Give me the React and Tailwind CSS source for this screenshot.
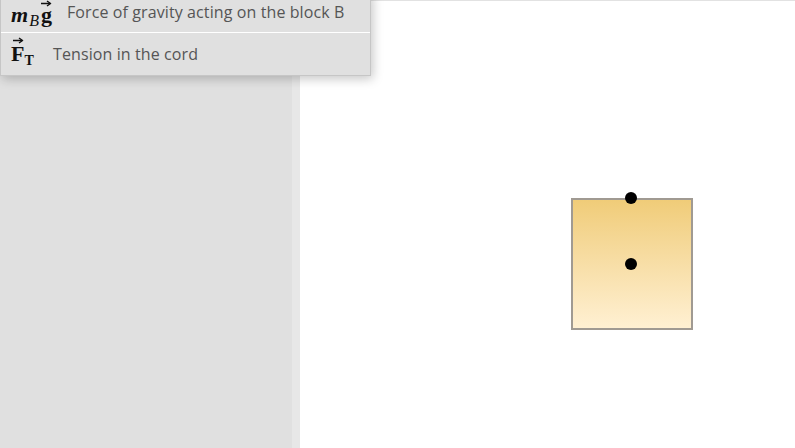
import React from "react";

function Vec({ children, className = "", top = "-5px" }) {
  return (
    <span className={"relative inline-block " + className}>
      {children}
      <svg
        className="absolute left-1/2 -translate-x-1/2"
        style={{ top }}
        width="11"
        height="7"
        viewBox="0 0 11 7"
      >
        <path d="M0.5 3.5 H9.5" stroke="#111" strokeWidth="1.4" />
        <path d="M6.5 1 L10 3.5 L6.5 6" fill="none" stroke="#111" strokeWidth="1.4" />
      </svg>
    </span>
  );
}

export default function App() {
  const serif = { fontFamily: '"Liberation Serif", "DejaVu Serif", serif' };
  return (
    <div
      className="relative flex w-[795px] h-[448px] overflow-hidden bg-white"
      style={{ fontFamily: '"Open Sans", "Noto Sans", sans-serif' }}
    >
      <div className="w-[292px] h-full bg-[#e0e0e0]" />
      <div className="w-[8px] h-full bg-[#e7e7e7]" />
      <div className="relative flex-1 h-full bg-white border-t border-[#e2e2e2]">
        <div className="absolute left-[271px] top-[197px] w-[122px] h-[132px] border-2 border-[#a09a92] bg-gradient-to-b from-[#f0cc78] to-[#fff0d2]" />
        <div className="absolute left-[325px] top-[191px] w-[12px] h-[12px] rounded-full bg-black" />
        <div className="absolute left-[325px] top-[257px] w-[12px] h-[12px] rounded-full bg-black" />
      </div>

      <div className="absolute left-0 top-[-9px] w-[371px] bg-[#e0e0e0] border border-[#c6c6c6] shadow-[2px_3px_10px_rgba(0,0,0,0.22)]">
        <div className="flex items-center h-[41px] pl-[10px] border-b border-white">
          <span className="flex items-end w-[56px] mt-[6px] text-[#111]" style={serif}>
            <span className="italic font-bold text-[22px] leading-none">m</span>
            <span className="italic text-[16px] leading-none mb-[-3px] ml-[1px]">B</span>
            <Vec className="font-bold text-[22px] leading-none ml-[2px]" top="-4px">g</Vec>
          </span>
          <span className="text-[16px] text-[#555] tracking-[0.1px]">
            Force of gravity acting on the block B
          </span>
        </div>
        <div className="flex items-center h-[42px] pl-[10px]">
          <span className="flex items-end w-[42px] text-[#111]" style={serif}>
            <Vec className="font-bold text-[22px] leading-none" top="-6px">F</Vec>
            <span className="font-bold text-[14px] leading-none mb-[-3px]">T</span>
          </span>
          <span className="text-[16px] text-[#555] tracking-[0.1px]">Tension in the cord</span>
        </div>
      </div>
    </div>
  );
}
